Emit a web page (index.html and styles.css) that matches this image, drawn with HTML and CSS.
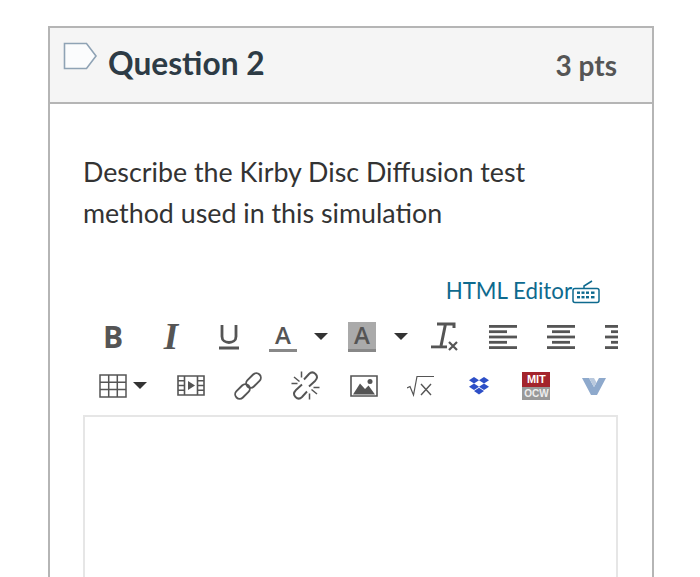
FILE: index.html
```html
<!DOCTYPE html>
<html lang="en">
<head>
<meta charset="utf-8">
<title>Question 2</title>
<link rel="stylesheet" href="styles.css">
</head>
<body>
<main class="card">
  <header class="head">
    <svg class="flag" width="36" height="32" viewBox="0 0 36 32"><path d="M1.5 2.5H23.5L33 15L23.5 27.5H1.5Z" fill="#fbfcfd" stroke="#8fa3b5" stroke-width="1.6"/></svg>
    <h2 class="title">Question 2</h2>
    <span class="pts">3 pts</span>
  </header>
  <div class="body">
    <p class="text">Describe the Kirby Disc Diffusion test<br>method used in this simulation</p>
    <div class="editor-link">
      <a class="html-link">HTML Editor</a>
      <svg class="kbd" width="28" height="24" viewBox="0 0 28 24"><g fill="none" stroke="#0e6a8e" stroke-width="1.5"><rect x="1" y="8.5" width="26" height="14" rx="2"/><path d="M12 8.5V6L20 1"/></g><g fill="#0e6a8e"><rect x="5" y="11.5" width="3" height="2.4"/><rect x="9.5" y="11.5" width="3" height="2.4"/><rect x="14" y="11.5" width="3" height="2.4"/><rect x="19" y="11.5" width="3.5" height="2.4"/><rect x="5" y="16" width="3" height="2.4"/><rect x="9.5" y="16" width="3" height="2.4"/><rect x="14" y="16" width="3" height="2.4"/><rect x="19" y="16" width="3.5" height="2.4"/></g></svg>
    </div>
    <div class="toolbar">
      <div class="row">
        <span class="btn w58"><span class="bold">B</span></span>
        <span class="btn w58"><span class="italic">I</span></span>
        <span class="btn w58"><svg width="20" height="26" viewBox="0 0 20 26"><path d="M3 1V12.5C3 20.5 17 20.5 17 12.5V1" fill="none" stroke="#555" stroke-width="2.8"/><rect x="0" y="22.5" width="20" height="3" fill="#555"/></svg></span>
        <span class="btn w50"><span class="a-wrap"><span class="a">A</span></span></span>
        <span class="btn w26"><i class="caret"></i></span>
        <span class="btn w56"><span class="a-wrap hl"><span class="a">A</span></span></span>
        <span class="btn w22"><i class="caret"></i></span>
        <span class="btn w66"><svg width="28" height="29" viewBox="0 0 28 29"><path d="M6 2H23V6M14.5 2L10 24" fill="none" stroke="#555" stroke-width="3"/><rect x="0" y="23.5" width="16" height="2.8" fill="#555"/><path d="M18 20L26 28M26 20L18 28" stroke="#555" stroke-width="2.2"/></svg></span>
        <span class="btn w50"><svg width="28" height="24" viewBox="0 0 28 24"><g fill="#555"><rect y="0" width="28" height="2.8"/><rect y="5.3" width="18" height="2.8"/><rect y="10.6" width="28" height="2.8"/><rect y="15.9" width="18" height="2.8"/><rect y="21.2" width="28" height="2.8"/></g></svg></span>
        <span class="btn w66"><svg width="28" height="24" viewBox="0 0 28 24"><g fill="#555"><rect y="0" width="28" height="2.8"/><rect x="5" y="5.3" width="18" height="2.8"/><rect y="10.6" width="28" height="2.8"/><rect x="5" y="15.9" width="18" height="2.8"/><rect y="21.2" width="28" height="2.8"/></g></svg></span>
        <span class="btn w26 clip"><svg width="13" height="24" viewBox="0 0 13 24"><g fill="#555"><rect y="0" width="13" height="2.8"/><rect x="6" y="5.3" width="7" height="2.8"/><rect y="10.6" width="13" height="2.8"/><rect x="6" y="15.9" width="7" height="2.8"/><rect y="21.2" width="13" height="2.8"/></g></svg></span>
      </div>
      <div class="row row-two">
        <span class="btn w28"><svg width="28" height="24" viewBox="0 0 28 24"><path d="M1 1H27V23H1ZM1 8.3H27M1 15.6H27M9.7 1V23M18.3 1V23" fill="none" stroke="#555" stroke-width="1.5"/></svg></span>
        <span class="btn w26"><i class="caret"></i></span>
        <span class="btn w57 film"><svg width="28" height="21" viewBox="0 0 28 21"><path d="M1 1H27V20H1ZM7.5 1V20M20.5 1V20M1 5.75H7.5M1 10.5H7.5M1 15.25H7.5M20.5 5.75H27M20.5 10.5H27M20.5 15.25H27" fill="none" stroke="#555" stroke-width="1.6"/><path d="M11 6L18 10.5L11 15Z" fill="#555"/></svg></span>
        <span class="btn w57"><svg width="28" height="28" viewBox="0 0 28 28"><g fill="none" stroke="#555" stroke-width="1.9"><rect x="-8.5" y="-4.5" width="17" height="9" rx="4.5" transform="translate(8.5 19.5) rotate(-45)"/><rect x="-8.5" y="-4.5" width="17" height="9" rx="4.5" transform="translate(19.5 8.5) rotate(-45)"/></g></svg></span>
        <span class="btn w57"><svg width="29" height="29" viewBox="0 0 29 29"><g fill="none" stroke="#555" stroke-width="1.9"><path d="M11 13.5L5 19C2.5 21.5 2.5 24 4.5 26C6.5 28 9 28 11 26L16 20.5"/><path d="M18 15.5L24 10C26.5 7.5 26.5 5 24.5 3C22.5 1 20 1 18 3L13 8.5"/></g><path d="M3 6L8.5 10.5M10.5 0.5V6.5M0.5 12.5H6.5M20.5 18.5L26 23M22.5 16.5H28.5M18.5 22.5V28.5" stroke="#555" stroke-width="1.5"/></svg></span>
        <span class="btn w57"><svg width="28" height="22" viewBox="0 0 28 22"><path d="M1 1H27V21H1Z" fill="#fff" stroke="#555" stroke-width="1.6"/><path d="M3 19.5L10 8.5L15 14L18.5 10.5L25 19.5Z" fill="#555"/><circle cx="20" cy="6.5" r="2.5" fill="#555"/></svg></span>
        <span class="btn w57"><svg width="28" height="22" viewBox="0 0 28 22"><path d="M0 13L3 11.5L6.5 20L10 1.5H27" fill="none" stroke="#555" stroke-width="1.2"/><path d="M14 9L24 20M24 9L14 20" stroke="#555" stroke-width="1.4"/></svg></span>
        <span class="btn w57"><svg width="20" height="20" viewBox="0 0 20 20"><g fill="#2d4fc7"><path d="M5 1L10 4.2L5 7.4L0 4.2Z"/><path d="M15 1L20 4.2L15 7.4L10 4.2Z"/><path d="M5 7.6L10 10.8L5 14L0 10.8Z"/><path d="M15 7.6L20 10.8L15 14L10 10.8Z"/><path d="M5 15L10 11.8L15 15L10 18.4Z"/></g></svg></span>
        <span class="btn w57"><span class="mit"><span class="mit-top">MIT</span><span class="mit-bot">OCW</span></span></span>
        <span class="btn w57"><svg width="24" height="20" viewBox="0 0 24 20"><path d="M0 2H7L12 11L17 2H24L15 19H9Z" fill="#8ea9cc"/><path d="M7 2H12L14.5 6.5L12 11Z" fill="#b9c9de"/></svg></span>
      </div>
    </div>
    <div class="input"></div>
  </div>
</main>
</body>
</html>
```
FILE: styles.css
```css
* { box-sizing: border-box; }
html, body { margin: 0; height: 577px; overflow: hidden; background: #fff; }
body { padding: 26px 46px 0 48px; font-family: Lato, sans-serif; color: #2d3b45; }
.card { border: 2px solid #b5b5b5; border-bottom: 0; height: 551px; overflow: hidden; }
.head { display: flex; align-items: center; height: 76px; padding: 0 35px 4px 13px; background: #f5f5f5; border-bottom: 2px solid #b5b5b5; }
.flag { align-self: flex-start; margin-top: 13px; flex: none; }
.title { margin: 0 0 0 9px; font-size: 31.7px; font-weight: 700; flex: 1; }
.pts { font-size: 28px; font-weight: 700; color: #555; margin-top: 3px; }
.body { padding: 48px 33px 0 33px; }
.text { margin: 0; font-size: 26.8px; line-height: 41px; color: #333; }
.editor-link { display: flex; justify-content: flex-end; align-items: flex-end; margin-top: 40px; padding-right: 19px; height: 32px; }
.html-link { color: #0e6a8e; font-size: 22.3px; line-height: 30px; }
.kbd { flex: none; margin-bottom: 2px; }
.toolbar { width: 534px; margin: 6px 0 0 1px; overflow: hidden; }
.row { display: flex; align-items: center; height: 49px; }
.row-two { padding-left: 15px; }
.btn { display: flex; justify-content: center; align-items: center; flex: none; height: 100%; }
.w22 { width: 22px; } .w26 { width: 26px; } .w28 { width: 28px; }
.w50 { width: 50px; } .w56 { width: 56px; } .w57 { width: 57.6px; } .w58 { width: 58px; } .w66 { width: 66px; }
.film { margin-left: 9px; }
.clip { justify-content: flex-start; margin-left: 11px; }
.bold { font: 700 30px "Open Sans", sans-serif; color: #555; line-height: 1; }
.italic { font: italic 700 37px "Liberation Serif", serif; color: #555; line-height: 1; }
.a-wrap { display: flex; justify-content: center; align-items: center; width: 28px; height: 30px; border-bottom: 3px solid #888; }
.a { font: 600 24px "Open Sans", sans-serif; color: #555; line-height: 1; }
.hl { background: #aaa; }
.caret { width: 0; height: 0; border-left: 7px solid transparent; border-right: 7px solid transparent; border-top: 7px solid #333; }
.mit { display: flex; flex-direction: column; width: 28px; height: 28px; }
.mit-top { height: 15px; background: #a3242c; color: #fff; font: 700 11px "Liberation Sans", sans-serif; text-align: center; line-height: 15px; }
.mit-bot { height: 13px; background: #999; color: #eee; font: 700 10px "Liberation Sans", sans-serif; text-align: center; line-height: 13px; }
.input { height: 170px; width: 535px; border: 2px solid #e6e6e6; margin-top: 5px; }
```
